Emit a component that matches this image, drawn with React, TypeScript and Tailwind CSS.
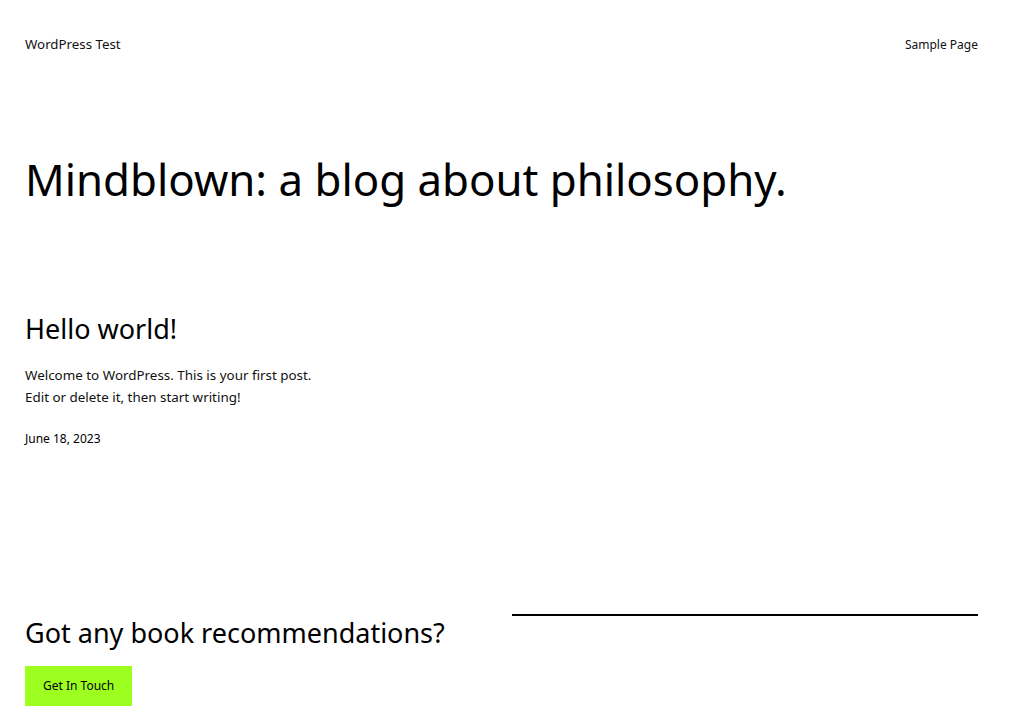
import React from "react";

const font = { fontFamily: '"Noto Sans", "Open Sans", sans-serif' };

export default function App() {
  return (
    <div className="min-h-screen bg-white text-black pl-[25px] pr-[46px]" style={font}>
      <header className="flex items-center justify-between pt-[33px] h-[56px]">
        <a className="text-[13.3px] text-[#111]">WordPress Test</a>
        <nav className="text-[12px] text-[#111]">Sample Page</nav>
      </header>

      <h1 className="mt-[97px] text-[43.8px] leading-[1.2] font-normal">
        Mindblown: a blog about philosophy.
      </h1>

      <article className="mt-[107px]">
        <h2 className="text-[27px] leading-[1.2]">Hello world!</h2>
        <div className="mt-[19px] text-[13.4px] leading-[22px] text-[#111]">
          <p>Welcome to WordPress. This is your first post.</p>
          <p>Edit or delete it, then start writing!</p>
        </div>
        <p className="mt-[22px] text-[12px]">June 18, 2023</p>
      </article>

      <section className="mt-[166px] flex">
        <div className="w-[487px] pt-[3px]">
          <h2 className="text-[27px] leading-[1.2]">Got any book recommendations?</h2>
          <button className="mt-[17px] bg-[#9dff20] px-[18px] h-[40px] text-[12px] text-black">
            Get In Touch
          </button>
        </div>
        <div className="flex-1">
          <div className="h-[2px] bg-black" />
        </div>
      </section>
    </div>
  );
}
